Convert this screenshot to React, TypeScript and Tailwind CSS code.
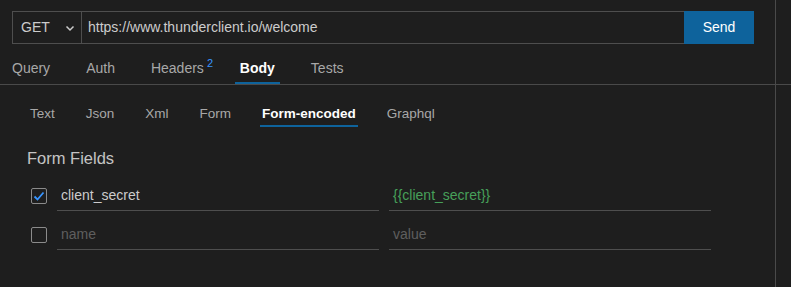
import React from 'react';

const tabs = ['Query', 'Auth', 'Headers', 'Body', 'Tests'];
const bodyTabs = ['Text', 'Json', 'Xml', 'Form', 'Form-encoded', 'Graphql'];

const Check = ({ checked }: { checked?: boolean }) => (
  <div className="w-4 h-4 shrink-0 border border-[#8b8b8b] rounded-[2px] flex items-center justify-center">
    {checked && (
      <svg width="12" height="12" viewBox="0 0 12 12" fill="none">
        <path d="M1.5 6.5 L4.5 9.5 L10.5 2.5" stroke="#3794ff" strokeWidth="1.8" />
      </svg>
    )}
  </div>
);

export default function App() {
  return (
    <div
      className="w-[791px] h-[287px] bg-[#1e1e1e] flex overflow-hidden text-[14px]"
      style={{ fontFamily: '"Liberation Sans", Arial, sans-serif' }}
    >
      <div className="w-[776px] h-full border-r border-[#4a4a4a] flex flex-col">
        {/* url bar */}
        <div className="pt-[11px] px-[12px] flex h-[44px]">
          <div className="w-[70px] h-[33px] border border-[#4e4e4e] flex items-center justify-between pl-[8px] pr-[6px] text-[#cccccc]">
            <span>GET</span>
            <svg width="10" height="10" viewBox="0 0 10 10" fill="none">
              <path d="M1.5 3.5 L5 7 L8.5 3.5" stroke="#cccccc" strokeWidth="1.5" />
            </svg>
          </div>
          <div className="w-[602px] h-[33px] border-y border-[#4e4e4e] flex items-center pl-[6px] text-[#cccccc]">
            https://www.thunderclient.io/welcome
          </div>
          <button className="w-[70px] h-[33px] bg-[#0e639c] text-white flex items-center justify-center">
            Send
          </button>
        </div>

        {/* request tabs */}
        <div className="flex h-[41px] border-b border-[#4a4a4a] pl-[7px] gap-[26px]">
          {tabs.map(t => (
            <div
              key={t}
              className={`relative px-[5px] pt-[16px] pb-[6px] leading-[16px] border-b-2 ${
                t === 'Body' ? 'border-[#0e639c] text-white font-bold' : 'border-transparent text-[#a8a8a8]'
              }`}
            >
              {t}
              {t === 'Headers' && (
                <span className="absolute left-[61px] top-[14px] text-[11px] leading-[11px] text-[#3794ff]">2</span>
              )}
            </div>
          ))}
        </div>

        {/* body tabs */}
        <div className="flex mt-[14px] pl-[28px] gap-[27px] text-[13.5px]">
          {bodyTabs.map(t => (
            <div
              key={t}
              className={`px-[2px] pt-[7px] pb-[3px] leading-[16px] border-b-2 ${
                t === 'Form-encoded' ? 'border-[#0e639c] text-white font-bold' : 'border-transparent text-[#a8a8a8]'
              }`}
            >
              {t}
            </div>
          ))}
        </div>

        <div className="mt-[21px] pl-[27px] text-[16.5px] leading-[20px] text-[#c4c4c4]">Form Fields</div>

        <div className="mt-[13px] pl-[31px] flex flex-col gap-[9px]">
          <div className="flex items-center gap-[10px]">
            <Check checked />
            <div className="w-[322px] h-[30px] border-b border-[#4e4e4e] flex items-center pl-[4px] text-[#cccccc]">
              client_secret
            </div>
            <div className="w-[322px] h-[30px] border-b border-[#4e4e4e] flex items-center pl-[4px] text-[#47a05a]">
              {'{{client_secret}}'}
            </div>
          </div>
          <div className="flex items-center gap-[10px]">
            <Check />
            <div className="w-[322px] h-[30px] border-b border-[#4e4e4e] flex items-center pl-[4px] text-[#5f5f5f]">
              name
            </div>
            <div className="w-[322px] h-[30px] border-b border-[#4e4e4e] flex items-center pl-[4px] text-[#5f5f5f]">
              value
            </div>
          </div>
        </div>
      </div>
      <div className="flex-1">
        <div className="h-[85px] border-b border-[#4a4a4a]" />
      </div>
    </div>
  );
}
